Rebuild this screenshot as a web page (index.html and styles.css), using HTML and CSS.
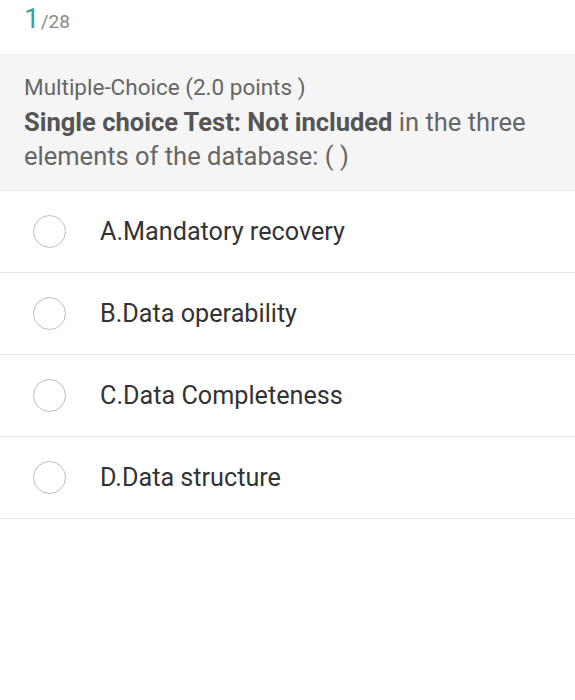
FILE: index.html
```html
<!DOCTYPE html>
<html>
<head>
<meta charset="utf-8">
<link rel="stylesheet" href="styles.css">
</head>
<body>
<div class="page">
  <header class="counter"><span class="cur">1</span><span class="total">/28</span></header>
  <section class="question">
    <div class="qtype">Multiple-Choice (2.0 points )</div>
    <div class="qtext"><b>Single choice Test: Not included</b> in the three elements of the database: ( )</div>
  </section>
  <ul class="options">
    <li class="option"><span class="radio"></span><span class="label">A.Mandatory recovery</span></li>
    <li class="option"><span class="radio"></span><span class="label">B.Data operability</span></li>
    <li class="option"><span class="radio"></span><span class="label">C.Data Completeness</span></li>
    <li class="option"><span class="radio"></span><span class="label">D.Data structure</span></li>
  </ul>
</div>
</body>
</html>
```
FILE: styles.css
```css
* { box-sizing: border-box; }
html, body { margin: 0; padding: 0; background: #fff; }
body { font-family: Roboto, "Liberation Sans", sans-serif; }
.page { width: 575px; }
.counter {
  height: 55px;
  padding: 4px 0 0 24px;
  border-bottom: 1px solid #ececec;
  display: flex;
  align-items: baseline;
}
.cur { font-size: 28px; color: #3aa39a; line-height: 30px; }
.total { font-size: 19px; color: #8a8a8a; margin-left: 1px; }
.question {
  background: #f5f5f5;
  padding: 16px 30px 14px 24px;
  border-bottom: 1px solid #e6e6e6;
  height: 136px;
}
.qtype { font-size: 22.5px; color: #666; line-height: 32px; }
.qtext { font-size: 25.5px; color: #666; line-height: 34px; margin-top: 2px; }
.qtext b { color: #555; font-weight: 700; }
.options { list-style: none; margin: 0; padding: 0; }
.option {
  height: 82px;
  display: flex;
  align-items: center;
  padding-left: 33px;
  border-bottom: 1px solid #e8e8e8;
}
.radio {
  width: 33px; height: 33px;
  border: 1.5px solid #bdbdbd;
  border-radius: 50%;
  flex: none;
}
.label { margin-left: 34px; font-size: 25.2px; color: #333; }
```
